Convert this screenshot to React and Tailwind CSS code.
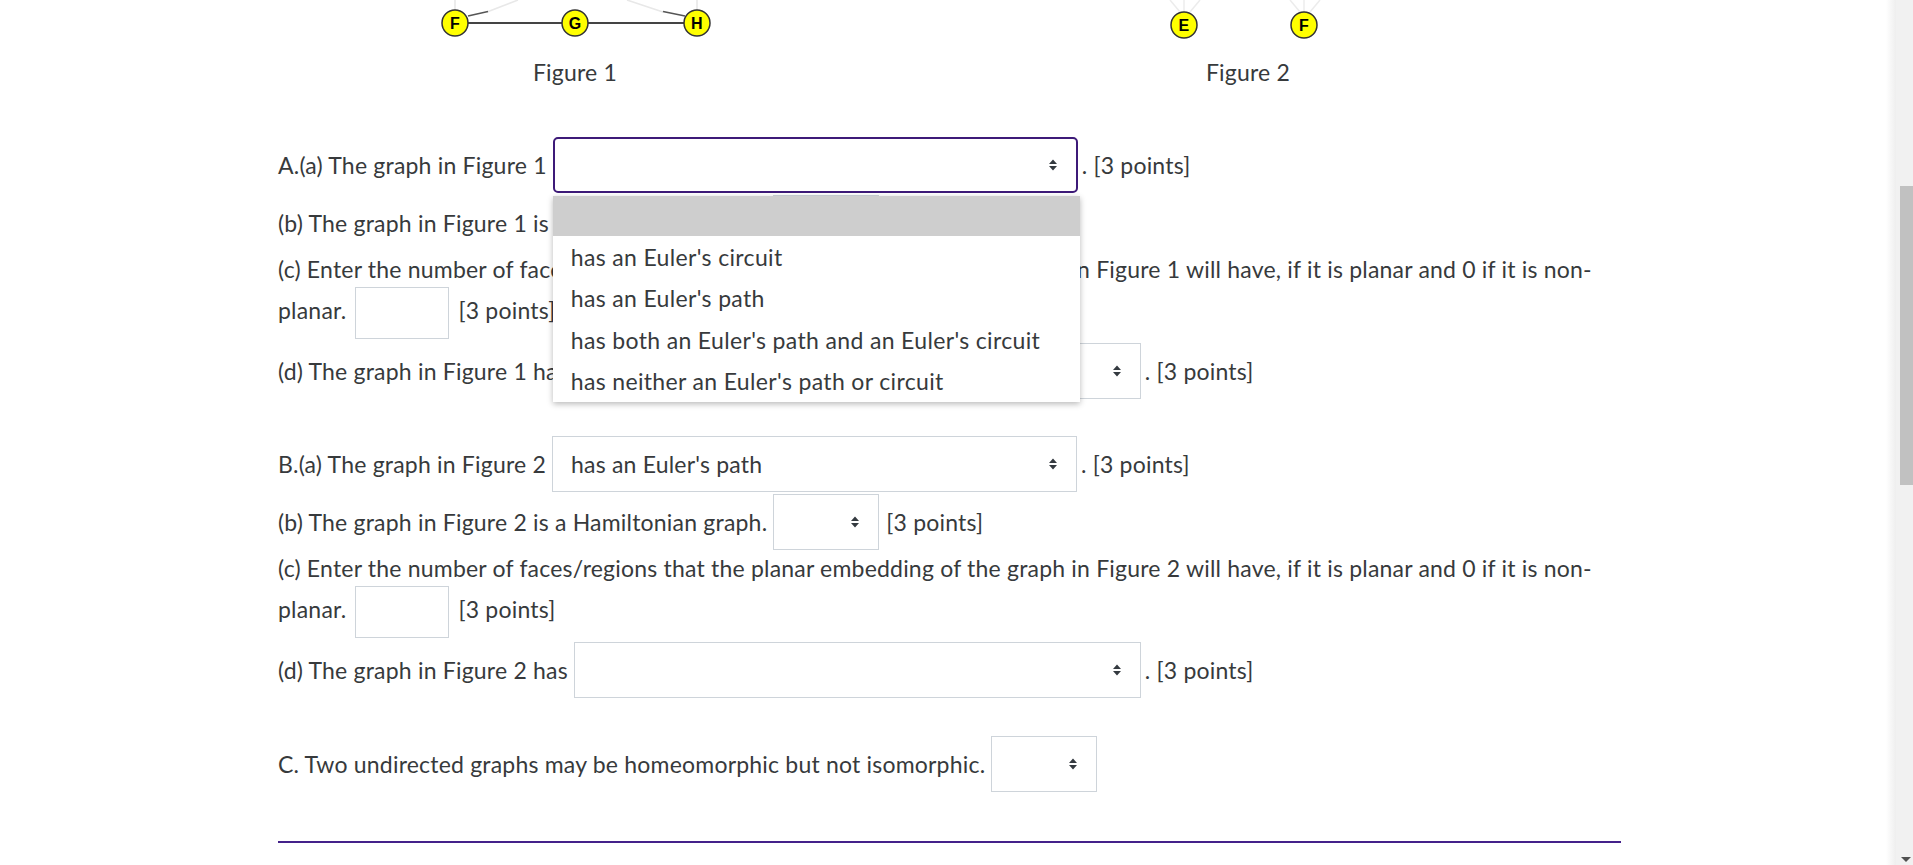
import React from "react";

const Arrow = () => (
  <svg width="10" height="14" viewBox="0 0 10 14" className="shrink-0">
    <path d="M5 1.5 L9 6 H1 Z M5 12.5 L9 8 H1 Z" fill="#343a40" />
  </svg>
);

function Sel({ className, value, focused, children }) {
  const base =
    "relative inline-flex h-[56px] shrink-0 items-center justify-between bg-white pl-[18px] pr-[18px] align-middle";
  const border = focused
    ? " border-2 border-[#3d1a78] rounded-[5px]"
    : " border border-[#ced4da]";
  return (
    <span className={base + border + " " + className}>
      <span className="whitespace-nowrap">{value || ""}</span>
      <Arrow />
      {children}
    </span>
  );
}

const Node = ({ x, y, label }) => (
  <g>
    <circle cx={x} cy={y} r="13" fill="#ffff00" stroke="#333" strokeWidth="1.5" />
    <text
      x={x}
      y={y + 5.5}
      textAnchor="middle"
      fontFamily="'Liberation Sans', Arial, sans-serif"
      fontWeight="bold"
      fontSize="16"
      fill="#000"
    >
      {label}
    </text>
  </g>
);

function Figure1() {
  return (
    <svg width="330" height="46" viewBox="0 0 330 46">
      <line x1="45" y1="0" x2="45" y2="10" stroke="#e6e6e6" strokeWidth="1.5" />
      <line x1="287" y1="0" x2="287" y2="10" stroke="#e6e6e6" strokeWidth="1.5" />
      <line x1="77" y1="12" x2="108" y2="0" stroke="#e8e8e8" strokeWidth="1.5" />
      <line x1="58" y1="16" x2="78" y2="11.5" stroke="#555" strokeWidth="1.5" />
      <line x1="253" y1="12" x2="217" y2="0" stroke="#e8e8e8" strokeWidth="1.5" />
      <line x1="275" y1="16" x2="253" y2="11.5" stroke="#555" strokeWidth="1.5" />
      <line x1="45" y1="23" x2="287" y2="23" stroke="#444" strokeWidth="2" />
      <Node x={45} y={23} label="F" />
      <Node x={165} y={23} label="G" />
      <Node x={287} y={23} label="H" />
    </svg>
  );
}

function Figure2() {
  return (
    <svg width="330" height="46" viewBox="0 0 330 46">
      <g stroke="#ececec" strokeWidth="1.5">
        <line x1="101" y1="0" x2="101" y2="12" />
        <line x1="87" y1="0" x2="97" y2="12" />
        <line x1="117" y1="0" x2="107" y2="12" />
        <line x1="221" y1="0" x2="221" y2="12" />
        <line x1="207" y1="0" x2="217" y2="12" />
        <line x1="237" y1="0" x2="227" y2="12" />
      </g>
      <Node x={101} y={25} label="E" />
      <Node x={221} y={25} label="F" />
    </svg>
  );
}

const Input = () => (
  <span className="mx-[3px] inline-block h-[52px] w-[94px] border border-[#ced4da] bg-white align-middle" />
);

const options = [
  "has an Euler's circuit",
  "has an Euler's path",
  "has both an Euler's path and an Euler's circuit",
  "has neither an Euler's path or circuit",
];

function Dropdown() {
  return (
    <div className="absolute left-[-2px] top-[57px] z-10 w-[527px] bg-white tracking-[0.35px] shadow-[0_2px_6px_rgba(0,0,0,0.28)]">
      <div className="h-[40px] bg-[#cecece]" />
      {options.map((o) => (
        <div key={o} className="flex h-[41.5px] items-center whitespace-nowrap px-[18px]">
          {o}
        </div>
      ))}
    </div>
  );
}

function Section({ fig, first }) {
  return (
    <div className="flex flex-col">
      <div className="flex h-[56px] items-center whitespace-nowrap">
        <span>{first}.(a) The graph in Figure {fig}</span>
        <Sel
          className="ml-[6px] w-[525px]"
          focused={fig === 1}
          value={fig === 2 ? "has an Euler's path" : ""}
        >
          {fig === 1 && <Dropdown />}
        </Sel>
        <span className="ml-[4px]">. [3 points]</span>
      </div>
      <div className="mt-[2px] flex h-[56px] items-center whitespace-nowrap">
        <span>(b) The graph in Figure {fig} is a Hamiltonian graph.</span>
        <Sel className="ml-[6px] w-[106px]" />
        <span className="ml-[7px]">[3 points]</span>
      </div>
      <p className="leading-[36px]">
        (c) Enter the number of faces/regions that the planar embedding of the graph in Figure{" "}
        {fig} will have, if it is planar and 0 if it is non-planar. <Input /> [3 points]
      </p>
      <div className="mt-[4px] flex h-[56px] items-center whitespace-nowrap">
        <span>(d) The graph in Figure {fig} has</span>
        <Sel className="ml-[6px] w-[567px]" />
        <span className="ml-[4px]">. [3 points]</span>
      </div>
    </div>
  );
}

export default function App() {
  return (
    <div className="flex h-[865px] w-full overflow-hidden bg-white font-[Lato,sans-serif] text-[23px] tracking-[0.2px] text-[#373a3c]">
      <main className="min-w-0 flex-1">
        <div className="ml-[278px] w-[1343px]">
          <div className="flex">
            <div className="ml-[132px] flex w-[330px] flex-col items-center">
              <Figure1 />
              <div className="mt-[11px] leading-[30px]">Figure 1</div>
            </div>
            <div className="ml-[343px] flex w-[330px] flex-col items-center">
              <Figure2 />
              <div className="mt-[11px] leading-[30px]">Figure 2</div>
            </div>
          </div>
          <div className="mt-[50px]">
            <Section fig={1} first="A" />
          </div>
          <div className="mt-[37px]">
            <Section fig={2} first="B" />
          </div>
          <div className="mt-[38px] flex h-[56px] items-center whitespace-nowrap">
            <span>C. Two undirected graphs may be homeomorphic but not isomorphic.</span>
            <Sel className="ml-[6px] w-[106px]" />
          </div>
          <div className="mt-[49px] border-t-2 border-[#44218a]" />
        </div>
      </main>
      <div className="w-[10px] bg-gradient-to-r from-white to-[#eeeeee]" />
      <div className="flex w-[17px] flex-col bg-[#f1f1f1]">
        <div className="h-[186px]" />
        <div className="ml-[4px] h-[299px] bg-[#c1c1c1]" />
        <div className="flex-1" />
        <div className="flex h-[8px] justify-end pr-[2px]">
          <svg width="10" height="6" viewBox="0 0 10 6">
            <path d="M0 0 H10 L5 5 Z" fill="#505050" />
          </svg>
        </div>
      </div>
    </div>
  );
}
